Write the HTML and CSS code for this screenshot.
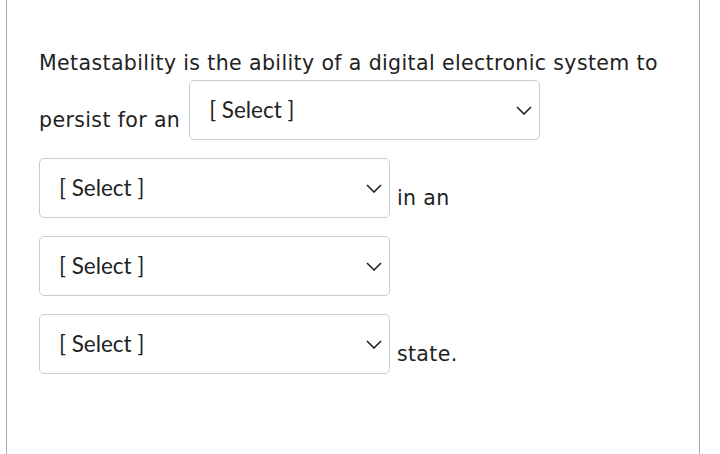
FILE: index.html
```html
<!DOCTYPE html>
<html>
<head>
<meta charset="utf-8">
<link rel="stylesheet" href="styles.css">
</head>
<body>
<div class="frame">
  <p class="question">Metastability is the ability of a digital electronic system to persist for an <span class="select select--after-text"><span class="label">[ Select ]</span><svg class="chev" viewBox="0 0 16 9" width="16" height="9"><path d="M1 1 L8 8 L15 1" fill="none" stroke="#222" stroke-width="1.6"/></svg></span> <span class="select"><span class="label">[ Select ]</span><svg class="chev" viewBox="0 0 16 9" width="16" height="9"><path d="M1 1 L8 8 L15 1" fill="none" stroke="#222" stroke-width="1.6"/></svg></span> in an <span class="select"><span class="label">[ Select ]</span><svg class="chev" viewBox="0 0 16 9" width="16" height="9"><path d="M1 1 L8 8 L15 1" fill="none" stroke="#222" stroke-width="1.6"/></svg></span> <span class="select"><span class="label">[ Select ]</span><svg class="chev" viewBox="0 0 16 9" width="16" height="9"><path d="M1 1 L8 8 L15 1" fill="none" stroke="#222" stroke-width="1.6"/></svg></span> state.</p>
</div>
</body>
</html>
```
FILE: styles.css
```css
html, body {
  margin: 0;
  padding: 0;
  background: #fff;
}
.frame {
  margin-left: 6px;
  width: 692px;
  height: 454px;
  border-left: 1px solid #a9a9a9;
  border-right: 1px solid #a9a9a9;
  box-sizing: content-box;
  padding: 0;
}
.question {
  margin: 0;
  padding: 48px 24px 0 32px;
  font-family: "DejaVu Sans", Verdana, sans-serif;
  font-size: 20.5px;
  letter-spacing: 0.38px;
  line-height: 30px;
  color: #222;
}
.select {
  display: inline-flex;
  align-items: center;
  justify-content: space-between;
  box-sizing: border-box;
  width: 351px;
  height: 60px;
  margin: 2px 0 16px 0;
  padding: 0 7px 0 19px;
  border: 1px solid #c7cdd1;
  border-radius: 5px;
  font-family: Lato, "Liberation Sans", sans-serif;
  font-size: 22.5px;
  letter-spacing: 0;
  color: #222;
  vertical-align: 9px;
  background: #fff;
}
.select--after-text {
  margin-left: 2px;
}
.chev {
  display: block;
}
```
